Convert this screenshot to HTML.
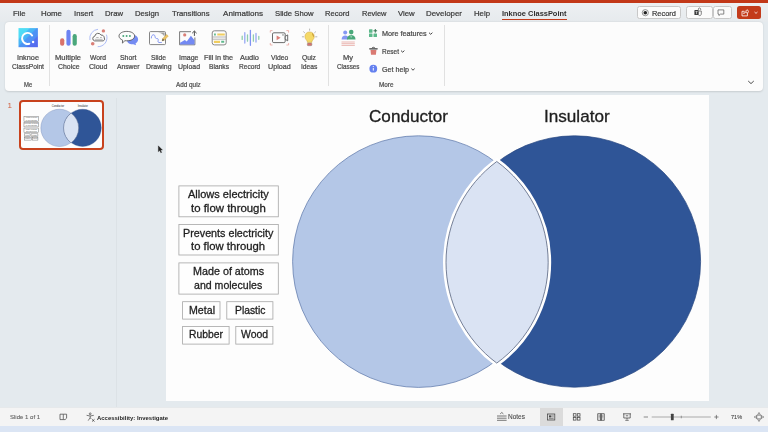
<!DOCTYPE html>
<html lang="en"><head><meta charset="utf-8"><title>PowerPoint - Inknoe ClassPoint</title>
<style>
*{box-sizing:border-box;margin:0;padding:0}
html,body{width:768px;height:432px;overflow:hidden}
body{position:relative;background:#e4eaee;font-family:"Liberation Sans",sans-serif;color:#404040}
.a{position:absolute}
.t{-webkit-text-stroke:0.22px currentColor;position:absolute;white-space:nowrap;transform-origin:0 50%;font-family:"Liberation Sans",sans-serif}
#topbar{left:0;top:0;width:768px;height:3.4px;background:#c23818}
#tabrow{left:0;top:3.4px;width:768px;height:19px;background:linear-gradient(#edf0f2,#e6eaed)}
#ribbon{left:5px;top:22px;width:758px;height:68.6px;background:#fcfcfc;border-radius:4px;box-shadow:0 0.8px 2px rgba(0,0,0,.13)}
.vsep{position:absolute;top:25px;width:1px;height:61px;background:#e1e1e1}
.tbtn{position:absolute;top:5.7px;height:13.8px;background:#fbfbfb;border:1px solid #c8c8c8;border-radius:2.5px}
#status{left:0;top:407px;width:768px;height:19px;background:#f4f4f4;border-top:1px solid #e6e9eb}
#strip{left:0;top:426px;width:768px;height:6px;background:#dbe5f4}
#slide{left:165.6px;top:94.5px;width:543.8px;height:306.1px;background:#fdfdfd}
#thumb{left:19.2px;top:100.4px;width:85.3px;height:49.8px;border:2.2px solid #c8421d;border-radius:4px;background:#fdfdfd}
.box{position:absolute;border:1px solid #b5b5b5;background:#fefefe}
#gfx{left:0;top:0}
#txt{position:absolute;left:0;top:0;width:768px;height:432px;will-change:transform}

</style></head><body>
<div id="topbar" class="a"></div>
<div id="tabrow" class="a"></div>
<div class="a" style="left:502px;top:18.5px;width:64.5px;height:1.2px;background:#c33b1b"></div>
<div class="tbtn" style="left:637.3px;width:43.7px"></div>
<div class="tbtn" style="left:686.4px;width:26.2px"></div>
<div class="tbtn" style="left:712.9px;width:18.7px"></div>
<div class="a" style="left:736.5px;top:5.7px;width:24.2px;height:13.8px;background:#c33b1b;border-radius:2.5px"></div>
<div id="ribbon" class="a"></div>
<div class="vsep" style="left:48.5px"></div>
<div class="vsep" style="left:328.3px"></div>
<div class="vsep" style="left:444.4px"></div>
<div class="a" style="left:115.6px;top:98px;width:1px;height:308.5px;background:#dce2e6"></div>
<div id="thumb" class="a"></div>
<div id="slide" class="a"></div>
<div id="status" class="a"></div>
<div class="a" style="left:540.2px;top:407.6px;width:23px;height:18.4px;background:#dbdbdb"></div>
<div id="strip" class="a"></div>
<svg id="gfx" class="a" width="768" height="432" viewBox="0 0 768 432">
<defs>
<linearGradient id="cp" x1="0" y1="0" x2="1" y2="1"><stop offset="0" stop-color="#50e2f5"/><stop offset=".27" stop-color="#4fd8f5"/><stop offset=".31" stop-color="#49b9f5"/><stop offset=".45" stop-color="#49b3f5"/><stop offset=".49" stop-color="#4d95f5"/><stop offset=".68" stop-color="#4f8ef4"/><stop offset=".72" stop-color="#5472f0"/><stop offset="1" stop-color="#5468ee"/></linearGradient>
</defs>
<g>
<ellipse cx="418.5" cy="261.6" rx="125.9" ry="125.8" fill="#b4c7e7" stroke="#5872a6" stroke-width=".7"/>
<ellipse cx="574.5" cy="261.5" rx="126.1" ry="125.7" fill="#2f5597" stroke="#27467f" stroke-width=".7"/>
<path d="M496.75 161.5A124.5 124.5 0 0 1 496.75 363.1A125.5 125.5 0 0 1 496.75 161.5Z" fill="#dae3f3" stroke="#fff" stroke-width="6"/>
<path d="M496.75 161.5A124.5 124.5 0 0 1 496.75 363.1A125.5 125.5 0 0 1 496.75 161.5Z" fill="#dae3f3" stroke="#56627e" stroke-width=".8"/>
</g>
<g id="boxes" fill="#fefefe" stroke="#a6a6a6" stroke-width=".8"><rect x="178.9" y="185.9" width="99.4" height="30.9"/><rect x="178.9" y="224.5" width="99.4" height="30.5"/><rect x="178.9" y="262.9" width="99.4" height="31.2"/><rect x="182.6" y="301.7" width="37.4" height="17.4"/><rect x="226.8" y="301.7" width="46.1" height="17.4"/><rect x="182.6" y="326.5" width="46.5" height="17.6"/><rect x="235.8" y="326.5" width="37.1" height="17.6"/></g>
<!-- ClassPoint logo -->
<rect x="18.5" y="28.1" width="19.4" height="19.1" fill="url(#cp)"/>
<path d="M32.1 35.5A5.4 5.5 0 1 0 29.3 43.7" fill="none" stroke="#fff" stroke-width="2" stroke-linecap="round"/>
<circle cx="33.1" cy="42" r="1.2" fill="#fff"/>
<!-- Multiple choice -->
<rect x="60.1" y="38.2" width="4.2" height="7.6" rx="2" fill="#d9736b"/>
<rect x="66.4" y="29.7" width="4.2" height="16.1" rx="2.1" fill="#6d83f2"/>
<rect x="72.6" y="34.1" width="4.2" height="11.7" rx="2.1" fill="#4aa77b"/>
<!-- Word cloud -->
<path d="M89.86 39.66A8.7 8.7 0 0 1 97.64 29.33M106.58 35.02A8.7 8.7 0 0 1 98.1 46.69" fill="none" stroke="#aebdf6" stroke-width="1" stroke-linecap="round"/>
<path d="M94.6 40.9a2.4 2.4 0 0 1 .2-4.700a3.300 3.300 0 0 1 6.200-1.100a2.800 2.800 0 0 1 3.300 2.800a2.100 2.100 0 0 1-1.100 3z" fill="#fbfbfb" stroke="#505050" stroke-width=".85" stroke-linejoin="round"/>
<path d="M94.800 39.300h7.800M96.200 37.500h2.400M100 37.500h1.800" stroke="#8a8a8a" stroke-width=".6"/>
<circle cx="103.4" cy="30.9" r="1.7" fill="#da7f77"/>
<circle cx="92.700" cy="43.800" r="1.8" fill="#da7f77"/>
<!-- Short answer -->
<path d="M128.5 36.5c3-2.6 9.6-1.8 9.6 3c0 1.8-1.1 3.2-2.6 4l.6 1.8l-2.8-1.1c-3 .5-6.200-1.200-6.200-4z" fill="#748bf2"/>
<path d="M126.8 31.4c4.400 0 7.800 1.900 7.800 4.700s-3.400 4.700-7.800 4.700c-.6 0-1.300 0-1.900-.1l-2.500 2.400l.2-3c-2.100-.8-3.600-2.300-3.600-4c0-2.800 3.400-4.700 7.800-4.700z" fill="#fcfcfc" stroke="#555" stroke-width=".85" stroke-linejoin="round"/>
<circle cx="123.300" cy="36" r="1" fill="#4aa77b"/><circle cx="126.6" cy="36" r="1" fill="#4aa77b"/><circle cx="129.9" cy="36" r="1" fill="#4aa77b"/>
<!-- Slide drawing -->
<rect x="149.500" y="31.600" width="16" height="13" rx="1" fill="#fcfcfc" stroke="#777" stroke-width=".9"/>
<path d="M158 32.600h6.600v4.300c-1.500-2.600-3.600-3.900-6.600-4.300z" fill="#a2a2a2"/>
<path d="M151.300 38c-.2-2 1.300-3.600 2.600-3.200c1.600.5.700 2.300 1.700 3.300c1 1 2.300-.2 2.600 1.200c.3 1.400-1 2.700.6 3.200c.9.300 1.700-.200 2.600-.100" fill="none" stroke="#8699f3" stroke-width="1" stroke-linecap="round"/>
<path d="M162.100 40.900l.600-2.300l3.900-4.200l1.700 1.600l-3.900 4.200z" fill="#ebc466" stroke="#c79a3a" stroke-width=".4"/>
<path d="M162.100 40.900l.600-2.300l1.700 1.600z" fill="#555"/>
<!-- Image upload -->
<path d="M191 31.700h-11.400v13.100h15.300v-7.300" fill="none" stroke="#6a6a6a" stroke-width=".9"/>
<path d="M180.100 44.400v-1.700l4.700-2.700l2 1.600l4.100-5.900l3.600 4.600v4.100z" fill="#7389f3"/>
<circle cx="184.700" cy="34.900" r="1.600" fill="#da7f77"/>
<path d="M194.400 35.900v-4.700m-2.200 2l2.200-2.200l2.200 2.200" fill="none" stroke="#444" stroke-width=".95"/>
<!-- Fill in the blanks -->
<rect x="212.200" y="30.800" width="14" height="14.100" rx="2.200" fill="#fcfcfc" stroke="#7c7c7c" stroke-width=".9"/>
<path d="M214.100 34.500h1.700M221.200 41.800h3" stroke="#5db88c" stroke-width="2"/>
<path d="M217.300 34.500h7.500M213.900 41.800h6.100" stroke="#f0cd5f" stroke-width="2.200"/>
<path d="M212.600 37h13.200M212.600 39.200h13.200" stroke="#9a9a9a" stroke-width=".7"/>
<!-- Audio record -->
<g stroke-width="1.3" stroke-linecap="round">
<path d="M242.200 36.200v3.200M247.500 34.800v6.400M253.400 34.800v6.400M258.800 36.300v3" stroke="#8fcdae"/>
<path d="M244.800 32.700v10.400M256 33.500v8.600" stroke="#97a8f5"/>
<path d="M250.400 30.500v14.800" stroke="#7f93f3"/>
</g>
<!-- Video upload -->
<path d="M270.300 32.600v-2h2.200M286.400 30.600h2.200v2M288.600 43v2h-2.200M272.500 45h-2.200v-2" fill="none" stroke="#e9a29a" stroke-width=".8"/>
<rect x="272.500" y="32.800" width="12.700" height="9.800" rx="1.300" fill="#fcfcfc" stroke="#5a5a5a" stroke-width=".9"/>
<path d="M285.200 36.400l2.500-1.500v5.900l-2.500-1.500z" fill="#fcfcfc" stroke="#5a5a5a" stroke-width=".9" stroke-linejoin="round"/>
<path d="M276.600 35.400v4.800l4-2.400z" fill="#dd8079"/>
<circle cx="283" cy="34.900" r=".6" fill="#444"/>
<!-- Quiz ideas -->
<path d="M309.600 31.900c2.800 0 4.700 2.100 4.700 4.600c0 1.800-1 2.900-1.800 3.900c-.5.600-.6 1.300-.6 2h-4.600c0-.7-.1-1.400-.6-2c-.8-1-1.800-2.100-1.800-3.900c0-2.500 1.900-4.600 4.700-4.600z" fill="#f5d967" stroke="#caa546" stroke-width=".5"/>
<path d="M312 33c1.400.9 2 2.500 1.600 4.200c-.6-.9-1.200-2.400-1.600-4.200z" fill="#b98a2a"/>
<rect x="307.300" y="43.100" width="4.600" height="2.600" rx=".8" fill="#d9736b" stroke="#888" stroke-width=".5"/>
<path d="M309.600 29v1.300M303.600 31.800l1 .9M315.600 31.800l-1 .9M302.300 36.800h1.300M316.900 36.800h-1.300" stroke="#9a9a9a" stroke-width=".7" stroke-linecap="round"/>
<!-- My classes -->
<circle cx="345.200" cy="32.500" r="2" fill="#8497f3"/>
<path d="M341.600 39.500c0-2.600 1.600-4.100 3.600-4.100s3.200 1.200 3.500 3.100l-1 1z" fill="#8497f3"/>
<circle cx="351.200" cy="32.100" r="2.300" fill="#4aa87a"/>
<path d="M346.900 39.500c0-2.900 1.800-4.500 4.300-4.500s4.300 1.600 4.300 4.500z" fill="#4aa87a"/>
<path d="M350.300 35.300l.9 2.200l.9-2.200" fill="none" stroke="#cfe9dc" stroke-width=".5"/>
<path d="M341.500 42h13.300M341.500 43.700h13.300M341.500 45.400h13.300" stroke="#e39a92" stroke-width=".7"/>
<!-- More features -->
<g fill="#5cb88a"><rect x="369" y="29.200" width="3.500" height="3.500" rx=".5"/><rect x="369" y="33.500" width="3.500" height="3.500" rx=".5"/><rect x="373.500" y="33.500" width="3.500" height="3.500" rx=".5"/></g>
<path d="M375.300 29v3.600M373.500 30.800h3.600" stroke="#2d6b4b" stroke-width=".95"/>
<!-- Reset (trash) -->
<path d="M370.500 49.900h5.900l-.5 4.800h-4.900z" fill="#da7a73"/>
<path d="M369.700 48.800h7.500" fill="none" stroke="#3f3f3f" stroke-width="1.200" stroke-linecap="round"/>
<path d="M372 48.300c0-1.300 2.900-1.300 2.900 0" fill="none" stroke="#3f3f3f" stroke-width=".9"/>
<!-- Get help -->
<circle cx="373.300" cy="68.700" r="3.900" fill="#6480ef"/>
<path d="M373.300 67.900v2.700" stroke="#fff" stroke-width=".95"/><circle cx="373.300" cy="66.500" r=".6" fill="#fff"/>
<!-- chevrons for small buttons -->
<g fill="none" stroke="#444" stroke-width="1"><path d="M429 32.700l1.700 1.600l1.700-1.600"/><path d="M401 50.600l1.700 1.600l1.700-1.600"/><path d="M411.300 68.600l1.700 1.600l1.700-1.600"/></g>
<!-- ribbon collapse chevron -->
<path d="M748.2 81l2.8 2.6l2.8-2.6" fill="none" stroke="#444" stroke-width=".95"/>
<!-- top right: record icon -->
<circle cx="645.300" cy="12.700" r="3.100" fill="none" stroke="#6a6a6a" stroke-width=".7"/><circle cx="645.300" cy="12.700" r="1.800" fill="#222"/>
<!-- teams-like icon -->
<rect x="694.4" y="10.1" width="4.3" height="4.9" rx=".6" fill="#3d3d3d"/>
<path d="M698.7 11h2.600v3.100c0 1.200-1.300 1.700-2.600 1.400M698.500 9.900a1.200 1.200 0 1 1 1.800.2" fill="none" stroke="#555" stroke-width=".7"/>
<path d="M695.500 11.500h2.100M696.550 11.500v2.600" stroke="#fbfbfb" stroke-width=".6"/>
<!-- comment icon -->
<path d="M718 9.900h5.800v4.200h-3.300l-1.600 1.400v-1.400h-.9z" fill="none" stroke="#555" stroke-width=".7" stroke-linejoin="round"/>
<!-- share icon -->
<path d="M744.300 11.300h-2.300v4.600h5.400v-2.700" fill="none" stroke="#fff" stroke-width=".8"/>
<path d="M743.700 13.800c.2-1.700 1.300-2.900 3.300-3v-1.200l2 1.900l-2 1.900v-1.200c-1.400 0-2.400.5-3.300 1.600z" fill="none" stroke="#fff" stroke-width=".7" stroke-linejoin="round"/>
<path d="M754.500 12l1.500 1.400l1.500-1.400" fill="none" stroke="#fff" stroke-width=".8"/>
<!-- cursor -->
<path d="M158.300 145.800v6l1.400-1.300l1.100 2.300l.9-.4l-1.100-2.300h1.900z" fill="#222" stroke="#222" stroke-width=".3"/>
<!-- status bar icons -->
<path d="M60 414.200h3.300v5.400h-3.300zM63.300 414.200h3.300v4l-1.500 1.400h-1.800" fill="none" stroke="#4a4a4a" stroke-width=".75" stroke-linejoin="round"/>
<g fill="none" stroke="#444" stroke-width=".7"><circle cx="90.200" cy="413.800" r=".9"/><path d="M86.600 415.300l3.600.7l3.600-.7M90.200 416v1.600l-2 3M90.200 417.600l1 1.400"/><path d="M92.100 419.300l2.400 2.200M94.500 419.300l-2.400 2.200" stroke-width=".8"/></g>
<path d="M497 418.2h9.600M497 416h9.600M500.200 413.900l1.600-1.400l1.600 1.400" fill="none" stroke="#4a4a4a" stroke-width=".75"/>
<path d="M497 420.300h9.600" stroke="#4a4a4a" stroke-width=".75"/>
<!-- view buttons -->
<g fill="none" stroke="#444" stroke-width=".75">
<rect x="547.600" y="414" width="7.200" height="6"/><rect x="549" y="415.400" width="2.400" height="2" fill="#444" stroke="none"/><path d="M549 418.600h4.600M552.300 415.800h1.300M552.300 417h1.300" stroke-width=".55"/>
<rect x="573.300" y="413.700" width="2.700" height="2.500"/><rect x="577.300" y="413.700" width="2.700" height="2.500"/><rect x="573.300" y="417.600" width="2.700" height="2.500"/><rect x="577.300" y="417.600" width="2.700" height="2.500"/>
<path d="M601 414.300v6M597.700 413.700h3.300v6.600h-3.300zM601 413.700h3.300v6.600h-3.300z"/><path d="M598.500 415.300h1.700M598.500 416.600h1.700M598.500 417.900h1.700M601.800 415.300h1.700M601.800 416.600h1.700M601.800 417.900h1.700" stroke-width=".45"/>
<path d="M623 413.800h8M623.800 413.800v4.200h6.400v-4.200M627 418v1.600M625.300 420.300h3.400M625.800 415.800h2.400"/>
</g>
<!-- zoom slider -->
<path d="M643.7 417h4.300M714.300 417h4.200M716.400 414.900v4.200" stroke="#5a5a5a" stroke-width=".7"/>
<path d="M651.700 417h59.100" stroke="#8a8a8a" stroke-width=".7"/>
<path d="M681.300 415.700v2.600" stroke="#666" stroke-width=".6"/>
<rect x="670.900" y="413.700" width="2.800" height="6.600" rx=".5" fill="#444"/>
<!-- fit icon -->
<g fill="none" stroke="#444" stroke-width=".75"><rect x="756.700" y="415" width="4.600" height="4" rx=".5"/><path d="M757.800 413.800l1.200-1.100l1.200 1.100M757.800 420.200l1.200 1.100l1.200-1.100M755.600 415.800l-1.100 1.200l1.100 1.200M762.400 415.800l1.100 1.200l-1.100 1.200"/></g>

</svg>
<svg class="a" style="left:21.8px;top:102.6px" width="80.6" height="45.6" viewBox="165.6 94.5 543.8 306.1">
<ellipse cx="418.5" cy="261.6" rx="125.9" ry="125.8" fill="#b4c7e7" stroke="#6d84b3" stroke-width="2.5"/>
<ellipse cx="574.5" cy="261.5" rx="126.1" ry="125.7" fill="#2f5597" stroke="#27467f" stroke-width="2"/>
<path d="M496.75 161.5A124.5 124.5 0 0 1 496.75 363.1A125.5 125.5 0 0 1 496.75 161.5Z" fill="#dae3f3" stroke="#59698c" stroke-width="3.5"/>
<g fill="#fff" stroke="#6f6f6f" stroke-width="3.2"><rect x="178.9" y="185.9" width="99.4" height="30.9"/><rect x="178.9" y="224.5" width="99.4" height="30.5"/><rect x="178.9" y="262.9" width="99.4" height="31.2"/><rect x="182.6" y="301.7" width="37.4" height="17.4"/><rect x="226.8" y="301.7" width="46.1" height="17.4"/><rect x="182.6" y="326.5" width="46.5" height="17.6"/><rect x="235.8" y="326.5" width="37.1" height="17.6"/></g>
<g font-family="Liberation Sans, sans-serif" fill="#222">
<text x="408" y="123" font-size="18" text-anchor="middle">Conductor</text>
<text x="576" y="123" font-size="18" text-anchor="middle">Insulator</text>
<g font-size="11.5" text-anchor="middle" fill="#555">
<text x="228.8" y="198">Allows electricity</text><text x="228.8" y="212">to flow through</text>
<text x="228.8" y="236">Prevents electricity</text><text x="228.8" y="250">to flow through</text>
<text x="228.8" y="275">Made of atoms</text><text x="228.8" y="289">and molecules</text>
<text x="201.6" y="314">Metal</text><text x="250" y="314">Plastic</text><text x="206" y="339">Rubber</text><text x="254.5" y="339">Wood</text>
</g></g>
</svg>
<div id="txt">
<span class="t" style="left:12.50px;top:8.00px;font-size:7.9px;line-height:11px;color:#3a3a3a;transform:scaleX(0.983)">File</span>
<span class="t" style="left:40.50px;top:8.00px;font-size:7.9px;line-height:11px;color:#3a3a3a;transform:scaleX(0.997)">Home</span>
<span class="t" style="left:73.75px;top:8.00px;font-size:7.9px;line-height:11px;color:#3a3a3a;transform:scaleX(0.975)">Insert</span>
<span class="t" style="left:105.00px;top:8.00px;font-size:7.9px;line-height:11px;color:#3a3a3a;transform:scaleX(0.977)">Draw</span>
<span class="t" style="left:135.00px;top:8.00px;font-size:7.9px;line-height:11px;color:#3a3a3a;transform:scaleX(0.977)">Design</span>
<span class="t" style="left:171.50px;top:8.00px;font-size:7.9px;line-height:11px;color:#3a3a3a;transform:scaleX(0.979)">Transitions</span>
<span class="t" style="left:222.50px;top:8.00px;font-size:7.9px;line-height:11px;color:#3a3a3a;transform:scaleX(1.024)">Animations</span>
<span class="t" style="left:274.50px;top:8.00px;font-size:7.9px;line-height:11px;color:#3a3a3a;transform:scaleX(0.975)">Slide Show</span>
<span class="t" style="left:325.00px;top:8.00px;font-size:7.9px;line-height:11px;color:#3a3a3a;transform:scaleX(0.963)">Record</span>
<span class="t" style="left:361.50px;top:8.00px;font-size:7.9px;line-height:11px;color:#3a3a3a;transform:scaleX(0.947)">Review</span>
<span class="t" style="left:397.75px;top:8.00px;font-size:7.9px;line-height:11px;color:#3a3a3a;transform:scaleX(0.987)">View</span>
<span class="t" style="left:426.00px;top:8.00px;font-size:7.9px;line-height:11px;color:#3a3a3a;transform:scaleX(1.001)">Developer</span>
<span class="t" style="left:474.00px;top:8.00px;font-size:7.9px;line-height:11px;color:#3a3a3a;transform:scaleX(0.986)">Help</span>
<span class="t" style="left:502.00px;top:8.00px;font-size:7.9px;line-height:11px;color:#2f2f2f;transform:scaleX(0.943);font-weight:bold;-webkit-text-stroke:0">Inknoe ClassPoint</span>
<span class="t" style="left:651.50px;top:8.00px;font-size:7.9px;line-height:11px;color:#3a3a3a;transform:scaleX(0.940)">Record</span>
<span class="t" style="left:17.00px;top:52.00px;font-size:7.3px;line-height:11px;color:#484848;transform:scaleX(1.004)">Inknoe</span>
<span class="t" style="left:12.00px;top:61.00px;font-size:7.3px;line-height:11px;color:#484848;transform:scaleX(0.917)">ClassPoint</span>
<span class="t" style="left:55.00px;top:52.00px;font-size:7.3px;line-height:11px;color:#484848;transform:scaleX(1.034)">Multiple</span>
<span class="t" style="left:57.50px;top:61.00px;font-size:7.3px;line-height:11px;color:#484848;transform:scaleX(0.946)">Choice</span>
<span class="t" style="left:90.00px;top:52.00px;font-size:7.3px;line-height:11px;color:#484848;transform:scaleX(0.924)">Word</span>
<span class="t" style="left:89.00px;top:61.00px;font-size:7.3px;line-height:11px;color:#484848;transform:scaleX(0.970)">Cloud</span>
<span class="t" style="left:119.50px;top:52.00px;font-size:7.3px;line-height:11px;color:#484848;transform:scaleX(0.945)">Short</span>
<span class="t" style="left:117.00px;top:61.00px;font-size:7.3px;line-height:11px;color:#484848;transform:scaleX(0.924)">Answer</span>
<span class="t" style="left:151.00px;top:52.00px;font-size:7.3px;line-height:11px;color:#484848;transform:scaleX(0.924)">Slide</span>
<span class="t" style="left:145.50px;top:61.00px;font-size:7.3px;line-height:11px;color:#484848;transform:scaleX(0.953)">Drawing</span>
<span class="t" style="left:178.50px;top:52.00px;font-size:7.3px;line-height:11px;color:#484848;transform:scaleX(0.961)">Image</span>
<span class="t" style="left:177.50px;top:61.00px;font-size:7.3px;line-height:11px;color:#484848;transform:scaleX(0.951)">Upload</span>
<span class="t" style="left:204.00px;top:52.00px;font-size:7.3px;line-height:11px;color:#484848;transform:scaleX(0.993)">Fill in the</span>
<span class="t" style="left:209.00px;top:61.00px;font-size:7.3px;line-height:11px;color:#484848;transform:scaleX(0.913)">Blanks</span>
<span class="t" style="left:240.00px;top:52.00px;font-size:7.3px;line-height:11px;color:#484848;transform:scaleX(1.018)">Audio</span>
<span class="t" style="left:238.75px;top:61.00px;font-size:7.3px;line-height:11px;color:#484848;transform:scaleX(0.903)">Record</span>
<span class="t" style="left:270.75px;top:52.00px;font-size:7.3px;line-height:11px;color:#484848;transform:scaleX(0.931)">Video</span>
<span class="t" style="left:268.00px;top:61.00px;font-size:7.3px;line-height:11px;color:#484848;transform:scaleX(0.984)">Upload</span>
<span class="t" style="left:302.00px;top:52.00px;font-size:7.3px;line-height:11px;color:#484848;transform:scaleX(0.932)">Quiz</span>
<span class="t" style="left:301.00px;top:61.00px;font-size:7.3px;line-height:11px;color:#484848;transform:scaleX(0.924)">Ideas</span>
<span class="t" style="left:343.00px;top:52.00px;font-size:7.3px;line-height:11px;color:#484848;transform:scaleX(1.027)">My</span>
<span class="t" style="left:336.80px;top:61.00px;font-size:7.3px;line-height:11px;color:#484848;transform:scaleX(0.867)">Classes</span>
<span class="t" style="left:381.80px;top:28.00px;font-size:7.3px;line-height:11px;color:#484848;transform:scaleX(0.993)">More features</span>
<span class="t" style="left:381.80px;top:46.00px;font-size:7.3px;line-height:11px;color:#484848;transform:scaleX(0.892)">Reset</span>
<span class="t" style="left:381.80px;top:64.00px;font-size:7.3px;line-height:11px;color:#484848;transform:scaleX(0.978)">Get help</span>
<span class="t" style="left:23.75px;top:80.00px;font-size:6.4px;line-height:9px;color:#505050;transform:scaleX(0.928)">Me</span>
<span class="t" style="left:176.25px;top:80.00px;font-size:6.4px;line-height:9px;color:#505050;transform:scaleX(0.995)">Add quiz</span>
<span class="t" style="left:379.30px;top:80.00px;font-size:6.4px;line-height:9px;color:#505050;transform:scaleX(0.996)">More</span>
<span class="t" style="left:7.40px;top:100.00px;font-size:8px;line-height:11px;color:#d06040;transform:scaleX(1.000);-webkit-text-stroke-width:0px">1</span>
<span class="t" style="left:10.30px;top:412.00px;font-size:6.2px;line-height:9px;color:#5c5c5c;transform:scaleX(0.975);-webkit-text-stroke-width:0.08px">Slide 1 of 1</span>
<span class="t" style="left:97.00px;top:413.00px;font-size:6.1px;line-height:9px;color:#1f1f1f;transform:scaleX(0.975);font-weight:bold;-webkit-text-stroke:0">Accessibility: Investigate</span>
<span class="t" style="left:508.00px;top:412.00px;font-size:6.3px;line-height:9px;color:#4a4a4a;transform:scaleX(1.033);-webkit-text-stroke-width:0.1px">Notes</span>
<span class="t" style="left:730.50px;top:412.00px;font-size:6.1px;line-height:9px;color:#4a4a4a;transform:scaleX(0.918);-webkit-text-stroke-width:0.1px">71%</span>
<span class="t" style="left:368.50px;top:106.00px;font-size:17px;line-height:21px;color:#1e1e1e;transform:scaleX(1.007);-webkit-text-stroke-width:0.32px">Conductor</span>
<span class="t" style="left:543.75px;top:106.00px;font-size:17px;line-height:21px;color:#1e1e1e;transform:scaleX(1.007);-webkit-text-stroke-width:0.32px">Insulator</span>
<span class="t" style="left:188.40px;top:187.00px;font-size:11.1px;line-height:14px;color:#1e1e1e;transform:scaleX(0.992);-webkit-text-stroke-width:0.3px">Allows electricity</span>
<span class="t" style="left:191.20px;top:201.00px;font-size:11.1px;line-height:14px;color:#1e1e1e;transform:scaleX(1.028);-webkit-text-stroke-width:0.3px">to flow through</span>
<span class="t" style="left:183.00px;top:226.00px;font-size:11.1px;line-height:14px;color:#1e1e1e;transform:scaleX(0.970);-webkit-text-stroke-width:0.3px">Prevents electricity</span>
<span class="t" style="left:191.20px;top:239.00px;font-size:11.1px;line-height:14px;color:#1e1e1e;transform:scaleX(1.018);-webkit-text-stroke-width:0.3px">to flow through</span>
<span class="t" style="left:193.30px;top:264.00px;font-size:11.1px;line-height:14px;color:#1e1e1e;transform:scaleX(0.970);-webkit-text-stroke-width:0.3px">Made of atoms</span>
<span class="t" style="left:194.30px;top:278.00px;font-size:11.1px;line-height:14px;color:#1e1e1e;transform:scaleX(0.953);-webkit-text-stroke-width:0.3px">and molecules</span>
<span class="t" style="left:188.50px;top:303.00px;font-size:11.1px;line-height:14px;color:#1e1e1e;transform:scaleX(0.958);-webkit-text-stroke-width:0.3px">Metal</span>
<span class="t" style="left:234.75px;top:303.00px;font-size:11.1px;line-height:14px;color:#1e1e1e;transform:scaleX(0.932);-webkit-text-stroke-width:0.3px">Plastic</span>
<span class="t" style="left:188.90px;top:327.00px;font-size:11.1px;line-height:14px;color:#1e1e1e;transform:scaleX(0.934);-webkit-text-stroke-width:0.3px">Rubber</span>
<span class="t" style="left:240.60px;top:327.00px;font-size:11.1px;line-height:14px;color:#1e1e1e;transform:scaleX(0.942);-webkit-text-stroke-width:0.3px">Wood</span>
</div>

</body></html>
